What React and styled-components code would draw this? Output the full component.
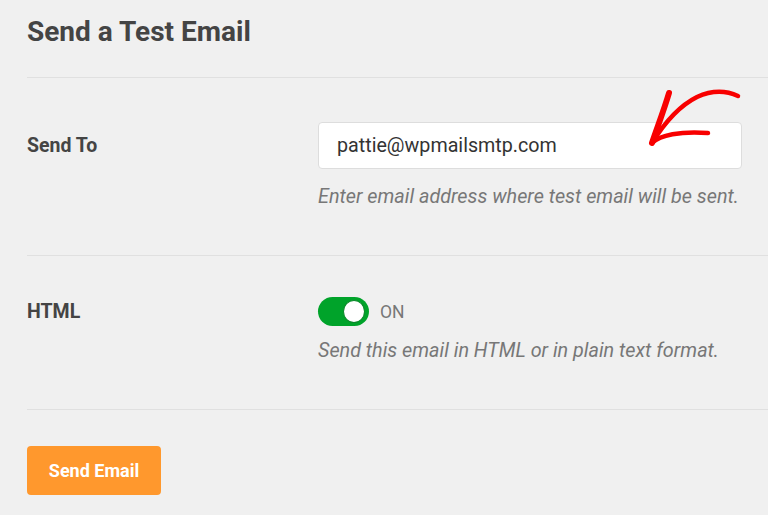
import React from 'react';
import styled, { createGlobalStyle } from 'styled-components';

const GlobalStyle = createGlobalStyle`
  html, body {
    margin: 0;
    padding: 0;
    background: #f0f0f0;
  }
  body {
    font-family: Roboto, "Liberation Sans", sans-serif;
  }
`

const Page = styled.div`
  position: relative;
  width: 768px;
  height: 515px;
  overflow: hidden;
  padding-left: 27px;
  box-sizing: border-box;
`

const Title = styled.h2`
  margin: 0;
  height: 78px;
  padding-top: 15px;
  box-sizing: border-box;
  font-size: 28px;
  line-height: 34px;
  font-weight: 700;
  color: #444;
  border-bottom: 1px solid #e0e0e0;
`

const Row = styled.div`
  display: grid;
  grid-template-columns: 291px 1fr;
  padding: ${props => props.$top}px 0 ${props => props.$bottom}px;
  border-bottom: 1px solid #e0e0e0;
`

const Label = styled.label`
  display: flex;
  align-items: center;
  height: ${props => props.$height}px;
  font-size: 19.5px;
  font-weight: 700;
  color: #444;
`

const Field = styled.div`
  display: flex;
  flex-direction: column;
`

const Input = styled.input.attrs({ type: 'email' })`
  width: 424px;
  height: 47px;
  box-sizing: border-box;
  padding: 0 18px;
  background: #fff;
  border: 1px solid #ddd;
  border-radius: 4px;
  font-family: inherit;
  font-size: 19.7px;
  color: #333;
  outline: none;
`

const Help = styled.p`
  margin: ${props => props.$gap}px 0 0;
  font-size: 19.8px;
  line-height: 24px;
  font-style: italic;
  color: #777;
`

const ToggleLine = styled.div`
  display: flex;
  align-items: center;
  height: 29px;
`

const Switch = styled.span`
  position: relative;
  display: inline-block;
  width: 51px;
  height: 29px;
  border-radius: 15px;
  background: #00a32a;

  &::after {
    content: '';
    position: absolute;
    top: 3px;
    right: 4px;
    width: 20px;
    height: 21px;
    border-radius: 50%;
    background: #fff;
    border: 1px solid #0a8a2a;
  }
`

const SwitchText = styled.span`
  margin-left: 11px;
  font-size: 17.5px;
  color: #777;
`

const Footer = styled.div`
  padding-top: 36px;
`

const Button = styled.button`
  width: 134px;
  height: 49px;
  border: none;
  border-radius: 4px;
  background: #ff982d;
  color: #fff;
  font-family: inherit;
  font-size: 18px;
  font-weight: 700;
  cursor: pointer;
`

const Arrow = styled.svg`
  position: absolute;
  left: 640px;
  top: 80px;
  width: 120px;
  height: 75px;
  pointer-events: none;
`

function App() {
  return (
    <Page>
      <GlobalStyle />
      <Title>Send a Test Email</Title>

      <Row $top={44} $bottom={46}>
        <Label $height={47}>Send To</Label>
        <Field>
          <Input defaultValue="pattie@wpmailsmtp.com" />
          <Help $gap={16}>Enter email address where test email will be sent.</Help>
        </Field>
      </Row>

      <Row $top={41} $bottom={46}>
        <Label $height={29}>HTML</Label>
        <Field>
          <ToggleLine>
            <Switch />
            <SwitchText>ON</SwitchText>
          </ToggleLine>
          <Help $gap={13}>Send this email in HTML or in plain text format.</Help>
        </Field>
      </Row>

      <Footer>
        <Button>Send Email</Button>
      </Footer>

      <Arrow viewBox="0 0 120 75">
        <g fill="none" stroke="#f80000" strokeLinecap="round" strokeLinejoin="round">
          <path d="M29 13 C24 30 17 48 12 63" strokeWidth="6" />
          <path d="M12 63 C20 50 35 28 57 17 C70 11 85 10 98 16" strokeWidth="4.5" />
          <path d="M12 63 C20 55 40 51 68 53" strokeWidth="4.5" />
        </g>
      </Arrow>
    </Page>
  );
}

export default App;
